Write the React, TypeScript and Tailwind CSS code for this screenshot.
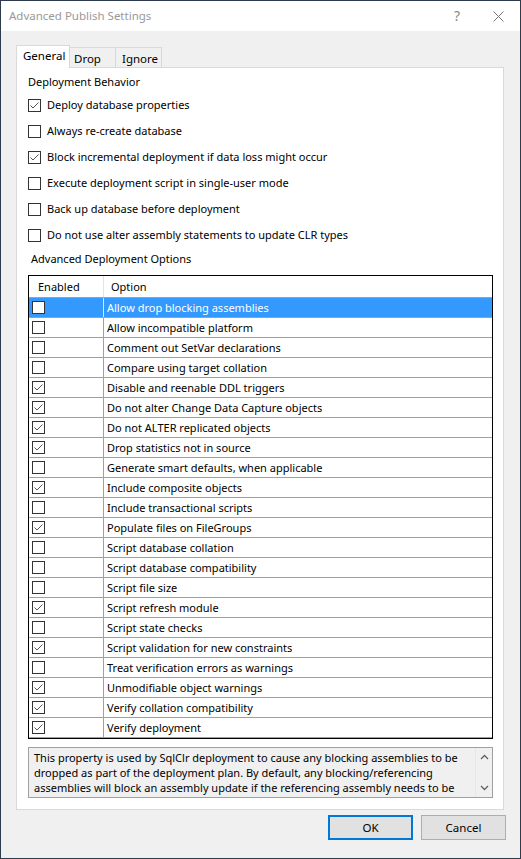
import React from "react";

const font = { fontFamily: '"Noto Sans", "Segoe UI", Arial, sans-serif' };

function Check({ checked }: { checked: boolean }) {
  return (
    <div className="w-[13px] h-[13px] border border-[#333333] bg-white shrink-0 flex items-center justify-center">
      {checked && (
        <svg width="11" height="11" viewBox="0 0 11 11">
          <polyline points="1.5,5.5 4,8 9.5,2.5" fill="none" stroke="#555555" strokeWidth="1" />
        </svg>
      )}
    </div>
  );
}

const general: [string, boolean][] = [
  ["Deploy database properties", true],
  ["Always re-create database", false],
  ["Block incremental deployment if data loss might occur", true],
  ["Execute deployment script in single-user mode", false],
  ["Back up database before deployment", false],
  ["Do not use alter assembly statements to update CLR types", false],
];

const options: [string, boolean][] = [
  ["Allow drop blocking assemblies", false],
  ["Allow incompatible platform", false],
  ["Comment out SetVar declarations", false],
  ["Compare using target collation", false],
  ["Disable and reenable DDL triggers", true],
  ["Do not alter Change Data Capture objects", true],
  ["Do not ALTER replicated objects", true],
  ["Drop statistics not in source", true],
  ["Generate smart defaults, when applicable", false],
  ["Include composite objects", true],
  ["Include transactional scripts", false],
  ["Populate files on FileGroups", true],
  ["Script database collation", false],
  ["Script database compatibility", false],
  ["Script file size", false],
  ["Script refresh module", true],
  ["Script state checks", false],
  ["Script validation for new constraints", true],
  ["Treat verification errors as warnings", false],
  ["Unmodifiable object warnings", true],
  ["Verify collation compatibility", true],
  ["Verify deployment", true],
];

export default function App() {
  return (
    <div
      style={font}
      className="w-[521px] h-[859px] border border-[#2e3b4c] bg-[#f0f0f0] flex flex-col text-[11px] text-black leading-[16px] overflow-hidden"
    >
      {/* Title bar */}
      <div className="h-[30px] bg-white flex items-center shrink-0">
        <div className="pl-[8px] text-[#999999] text-[11.5px]">Advanced Publish Settings</div>
        <div className="flex-1" />
        <div className="w-[20px] text-center text-[#888888] text-[14px] mr-[25px]">?</div>
        <div className="w-[12px] h-[12px] mr-[16px] flex items-center justify-center">
          <svg width="11" height="11" viewBox="0 0 11 11">
            <line x1="0.5" y1="0.5" x2="10.5" y2="10.5" stroke="#777777" strokeWidth="1" />
            <line x1="10.5" y1="0.5" x2="0.5" y2="10.5" stroke="#777777" strokeWidth="1" />
          </svg>
        </div>
      </div>

      {/* Tabs */}
      <div className="mt-[14px] px-[15px] flex items-end h-[22px] shrink-0 text-[11.5px]">
        <div className="h-[23px] -mb-px relative z-10 w-[54px] bg-white border border-b-0 border-[#d9d9d9] pl-[6px] pt-[2px]">General</div>
        <div className="h-[20px] w-[46px] border border-l-0 border-b-0 border-[#d9d9d9] pl-[4px] pt-[3px]">Drop</div>
        <div className="h-[20px] w-[46px] border border-l-0 border-b-0 border-[#d9d9d9] pl-[6px] pt-[3px]">Ignore</div>
      </div>

      {/* Panel */}
      <div className="mx-[15px] w-[488px] h-[743px] bg-white border border-[#d9d9d9] flex flex-col pl-[11px] pt-[6px] shrink-0">
        <div className="h-[16px]">Deployment Behavior</div>
        <div className="mt-[2px] flex flex-col">
          {general.map(([label, c]) => (
            <div key={label} className="h-[26px] flex items-center gap-[6px]">
              <Check checked={c} />
              <span>{label}</span>
            </div>
          ))}
        </div>
        <div className="mt-[3px] h-[16px] pl-[3px]">Advanced Deployment Options</div>

        {/* Grid */}
        <div className="mt-[8px] w-[465px] h-[464px] border border-black flex flex-col">
          <div className="h-[22px] flex border-b border-[#a0a0a0] shrink-0">
            <div className="w-[75px] border-r border-[#e3e3e3] pl-[9px] flex items-center">Enabled</div>
            <div className="flex-1 pl-[7px] flex items-center">Option</div>
          </div>
          {options.map(([label, c], i) => {
            const sel = i === 0;
            return (
              <div
                key={label}
                className={`h-[20px] flex border-b border-[#a0a0a0] shrink-0 ${sel ? "bg-[#3399ff] text-white" : ""}`}
              >
                <div className={`w-[75px] border-r ${sel ? "border-[#d6e8fb]" : "border-[#a0a0a0]"} pl-[3px] flex items-center`}>
                  <Check checked={c} />
                </div>
                <div className="flex-1 pl-[3px] flex items-center whitespace-nowrap">{label}</div>
              </div>
            );
          })}
        </div>

        {/* Description */}
        <div className="mt-[8px] w-[465px] h-[51px] border border-[#a0a0a0] bg-[#f0f0f0] flex">
          <div className="flex-1 pl-[5px] pt-[2px] leading-[15px] overflow-hidden whitespace-nowrap">
            <div>This property is used by SqlClr deployment to cause any blocking assemblies to be</div>
            <div>dropped as part of the deployment plan. By default, any blocking/referencing</div>
            <div>assemblies will block an assembly update if the referencing assembly needs to be</div>
          </div>
          <div className="w-[17px] border-l border-[#e6e6e6] flex flex-col items-center justify-between py-[6px]">
            <svg width="9" height="6" viewBox="0 0 9 6">
              <polyline points="1,5 4.5,1.5 8,5" fill="none" stroke="#606060" strokeWidth="1.3" />
            </svg>
            <svg width="9" height="6" viewBox="0 0 9 6">
              <polyline points="1,1 4.5,4.5 8,1" fill="none" stroke="#606060" strokeWidth="1.3" />
            </svg>
          </div>
        </div>
      </div>

      {/* Buttons */}
      <div className="mt-[5px] flex justify-end gap-[8px] pr-[14px] shrink-0 text-[11.5px]">
        <div className="w-[85px] h-[25px] border-2 border-[#0078d7] bg-[#e1e1e1] flex items-center justify-center">OK</div>
        <div className="w-[85px] h-[25px] border border-[#adadad] bg-[#e1e1e1] flex items-center justify-center">Cancel</div>
      </div>
    </div>
  );
}
